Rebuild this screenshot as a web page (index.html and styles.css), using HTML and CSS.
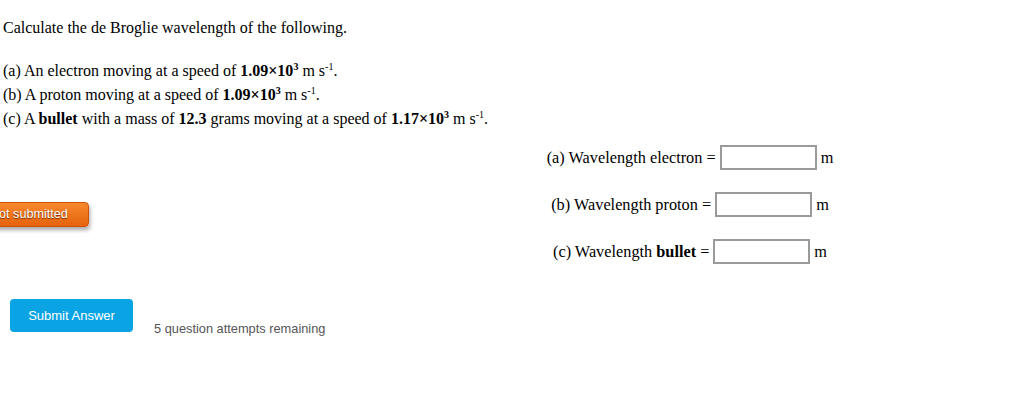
FILE: index.html
```html
<!DOCTYPE html>
<html>
<head>
<meta charset="utf-8">
<link rel="stylesheet" href="styles.css">
</head>
<body>
<div class="page">
  <div class="question">
    <p class="intro">Calculate the de Broglie wavelength of the following.</p>
    <div class="parts">
      <div class="line">(a) An electron moving at a speed of <b>1.09×10<sup>3</sup></b> m s<sup>-1</sup>.</div>
      <div class="line">(b) A proton moving at a speed of <b>1.09×10<sup>3</sup></b> m s<sup>-1</sup>.</div>
      <div class="line">(c) A <b>bullet</b> with a mass of <b>12.3</b> grams moving at a speed of <b>1.17×10<sup>3</sup></b> m s<sup>-1</sup>.</div>
    </div>
  </div>
  <div class="work">
    <div class="status-col">
      <span class="status">Not submitted</span>
    </div>
    <div class="answers">
      <div class="answer"><span>(a) Wavelength electron =</span><span class="box"></span><span class="unit">m</span></div>
      <div class="answer"><span>(b) Wavelength proton =</span><span class="box"></span><span class="unit">m</span></div>
      <div class="answer"><span>(c) Wavelength <b>bullet</b> =</span><span class="box"></span><span class="unit">m</span></div>
    </div>
  </div>
  <div class="actions">
    <button class="submit">Submit Answer</button>
    <span class="attempts">5 question attempts remaining</span>
  </div>
</div>
</body>
</html>
```

FILE: styles.css
```css
html, body {
  margin: 0;
  padding: 0;
  background: #fff;
}
.page {
  font-family: "Liberation Serif", "Times New Roman", serif;
  font-size: 16px;
  color: #000;
  padding: 18px 0 0 3px;
  overflow: hidden;
  width: 1024px;
  box-sizing: border-box;
}
.intro {
  margin: 0;
  line-height: 20px;
}
.parts {
  margin-top: 21px;
}
.line {
  line-height: 24px;
}
sup {
  font-size: 10px;
  line-height: 0;
  vertical-align: 6px;
}
.work {
  display: flex;
  margin-top: 14px;
}
.status-col {
  width: 423px;
  padding-top: 57px;
}
.status {
  display: inline-block;
  margin-left: -25px;
  width: 111px;
  height: 25px;
  box-sizing: border-box;
  padding-left: 11px;
  line-height: 23px;
  font-family: "Liberation Sans", Arial, sans-serif;
  font-size: 12.6px;
  color: #fff;
  text-shadow: 0 1px 1px rgba(90, 30, 0, 0.85);
  background: linear-gradient(#f8892e, #e5620c);
  border: 1px solid #d0520a;
  border-radius: 4px;
  box-shadow: 1px 3px 4px rgba(0, 0, 0, 0.35);
}
.answers {
  width: 540px;
  display: flex;
  flex-direction: column;
  align-items: center;
  gap: 22px;
}
.answer {
  display: flex;
  align-items: center;
  height: 25px;
  font-size: 16.3px;
}
.box {
  width: 97px;
  height: 25px;
  box-sizing: border-box;
  border: 2px solid #9a9a9a;
  margin: 0 4px 0 4px;
  background: #fff;
}
.unit {
  margin-right: 12px;
}
.actions {
  display: flex;
  align-items: flex-start;
  margin-top: 35px;
  margin-left: 7px;
}
.submit {
  width: 123px;
  height: 33px;
  border: none;
  border-radius: 4px;
  background: #0aa3e3;
  color: #fff;
  font-family: "Liberation Sans", Arial, sans-serif;
  font-size: 13px;
  padding: 0;
  margin-right: 21px;
}
.attempts {
  font-family: "Liberation Sans", Arial, sans-serif;
  font-size: 12.8px;
  color: #555;
  margin-top: 22px;
}
```
